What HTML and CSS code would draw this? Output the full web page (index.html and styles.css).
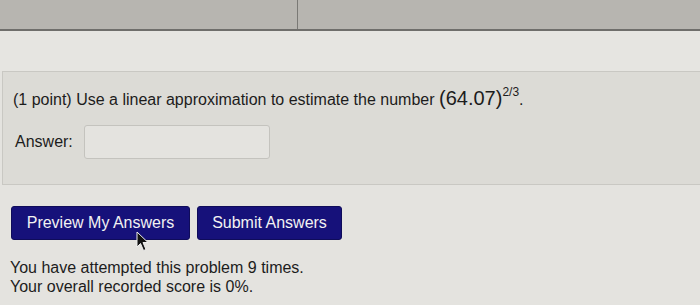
FILE: index.html
```html
<html lang="en">

<head>
    <meta charset="utf-8" />
    <title>Problem</title>
    <link rel="stylesheet" href="styles.css">
</head>

<body>

    <div class="topbar">
        <div class="tab tab-left"></div>
        <div class="tab tab-right"></div>
    </div>

    <div class="gap"></div>

    <div class="problem">
        <p class="question">(1 point) Use a linear approximation to estimate the number
            <span class="math">(64.07)<sup>2/3</sup></span>.</p>
        <div class="answer-row">
            <label>Answer:</label>
            <div class="answer-box"></div>
        </div>
    </div>

    <div class="actions">
        <button class="btn">Preview My Answers</button>
        <button class="btn">Submit Answers</button>
        <svg class="cursor" width="14" height="22" viewBox="0 0 14 22">
            <path d="M1 1 L1 16 L4.5 12.5 L7.5 19.5 L10 18.5 L7 11.5 L12 11.5 Z" fill="#111" stroke="#eee" stroke-width="1"/>
        </svg>
    </div>

    <div class="status">
        <p>You have attempted this problem 9 times.</p>
        <p>Your overall recorded score is 0%.</p>
    </div>

</body>

</html>
```

FILE: styles.css
```css
body {
    margin: 0;
    background-color: #e4e3df;
    font-family: "Liberation Sans", Arial, sans-serif;
    color: #1c1c1c;
    width: 700px;
    height: 305px;
    overflow: hidden;
    position: relative;
}

.topbar {
    display: flex;
    height: 29px;
    background-color: #b7b5b0;
    border-bottom: 2px solid #6f6e6b;
}

.tab-left {
    width: 297px;
    border-right: 1px solid #7a7975;
}

.gap {
    height: 40px;
    background-color: #e6e5e1;
}

.problem {
    margin-left: 2px;
    height: 114px;
    background-color: #dcdbd6;
    border: 1px solid #c9c8c3;
    border-right: none;
    box-sizing: border-box;
    padding: 14px 0 0 10px;
}

.question {
    margin: 0;
    font-size: 16px;
    line-height: 24px;
}

.math {
    font-size: 20px;
}

.math sup {
    font-size: 12px;
    vertical-align: 9px;
    line-height: 0;
}

.answer-row {
    display: flex;
    align-items: center;
    margin-top: 13px;
}

.answer-row label {
    font-size: 16px;
    margin-left: 2px;
    width: 69px;
}

.answer-box {
    width: 184px;
    height: 32px;
    background-color: #e4e3df;
    border: 1px solid #c4c3be;
    border-radius: 3px;
}

.actions {
    display: flex;
    gap: 7px;
    padding: 21px 0 0 11px;
    position: relative;
}

.btn {
    height: 34px;
    padding: 0;
    background-color: #16117a;
    color: #f2f2f2;
    border: 1px solid #0f0c5a;
    border-radius: 3px;
    font-family: "Liberation Sans", Arial, sans-serif;
    font-size: 16px;
}

.btn:first-child {
    width: 179px;
}

.btn:nth-child(2) {
    width: 145px;
}

.cursor {
    position: absolute;
    left: 136px;
    top: 46px;
}

.status {
    padding: 18px 0 0 10px;
    font-size: 16px;
}

.status p {
    margin: 0;
    line-height: 19px;
}
```
